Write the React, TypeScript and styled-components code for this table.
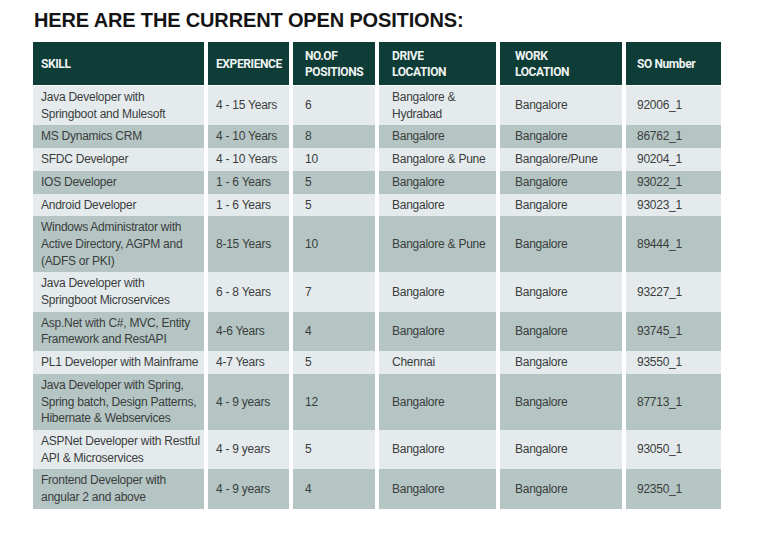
import React from 'react'
import styled, { createGlobalStyle } from 'styled-components'

const GlobalStyle = createGlobalStyle`
  html, body {
    margin: 0;
    padding: 0;
    background: #ffffff;
  }
  body {
    font-family: 'Liberation Sans', Arial, sans-serif;
  }
`

type Column = { key: string; title: React.ReactNode; width: number; pad: number }

const columns: Column[] = [
  { key: 'skill', title: 'SKILL', width: 171, pad: 8 },
  { key: 'exp', title: 'EXPERIENCE', width: 81, pad: 8 },
  { key: 'pos', title: <>NO.OF<br />POSITIONS</>, width: 82, pad: 12 },
  { key: 'drive', title: <>DRIVE<br />LOCATION</>, width: 117, pad: 13 },
  { key: 'work', title: <>WORK<br />LOCATION</>, width: 122, pad: 15 },
  { key: 'so', title: 'SO Number', width: 95, pad: 11 }
]

const rows: string[][] = [
  ['Java Developer with\nSpringboot and Mulesoft', '4 - 15 Years', '6', 'Bangalore &\nHydrabad', 'Bangalore', '92006_1'],
  ['MS Dynamics CRM', '4 - 10 Years', '8', 'Bangalore', 'Bangalore', '86762_1'],
  ['SFDC Developer', '4 - 10 Years', '10', 'Bangalore & Pune', 'Bangalore/Pune', '90204_1'],
  ['IOS Developer', '1 - 6 Years', '5', 'Bangalore', 'Bangalore', '93022_1'],
  ['Android Developer', '1 - 6 Years', '5', 'Bangalore', 'Bangalore', '93023_1'],
  ['Windows Administrator with\nActive Directory, AGPM and\n(ADFS or PKI)', '8-15 Years', '10', 'Bangalore & Pune', 'Bangalore', '89444_1'],
  ['Java Developer with\nSpringboot Microservices', '6 - 8 Years', '7', 'Bangalore', 'Bangalore', '93227_1'],
  ['Asp.Net with C#, MVC, Entity\nFramework and RestAPI', '4-6 Years', '4', 'Bangalore', 'Bangalore', '93745_1'],
  ['PL1 Developer with Mainframe', '4-7 Years', '5', 'Chennai', 'Bangalore', '93550_1'],
  ['Java Developer with Spring,\nSpring batch, Design Patterns,\nHibernate & Webservices', '4 - 9 years', '12', 'Bangalore', 'Bangalore', '87713_1'],
  ['ASPNet Developer with Restful\nAPI & Microservices', '4 - 9 years', '5', 'Bangalore', 'Bangalore', '93050_1'],
  ['Frontend Developer with\nangular 2 and above', '4 - 9 years', '4', 'Bangalore', 'Bangalore', '92350_1']
]

const Page = styled.div`
  width: 757px;
  height: 537px;
  padding: 8px 0 0 29px;
  box-sizing: border-box;
  overflow: hidden;
`

const Title = styled.h1`
  margin: 0 0 10px 5px;
  font-family: 'Liberation Sans', Arial, sans-serif;
  font-weight: 700;
  font-size: 20px;
  line-height: 24px;
  letter-spacing: -0.15px;
  color: #141414;
`

const Table = styled.table`
  border-collapse: separate;
  border-spacing: 4px 0;
  table-layout: fixed;
`

const HeadCell = styled.th<{ $w: number; $pad: number }>`
  width: ${(p) => p.$w}px;
  height: 44px;
  box-sizing: border-box;
  padding: 0 0 0 ${(p) => p.$pad}px;
  background: #0e3c37;
  color: #eef3f2;
  text-align: left;
  vertical-align: middle;
  white-space: nowrap;
  font-family: Roboto, 'Liberation Sans', sans-serif;
  font-weight: 700;
  font-size: 12px;
  line-height: 16px;
  letter-spacing: -0.4px;
  border-bottom: 1px solid #ffffff;
`

const Row = styled.tr<{ $shade: boolean }>`
  background: ${(p) => (p.$shade ? '#b4c5c3' : '#e5ebed')};
`

const Cell = styled.td<{ $pad: number }>`
  box-sizing: border-box;
  padding: 3px 0 3px ${(p) => p.$pad}px;
  vertical-align: middle;
  white-space: pre;
  overflow: hidden;
  font-family: 'Liberation Sans', Arial, sans-serif;
  font-size: 12px;
  line-height: 16.7px;
  letter-spacing: -0.25px;
  color: #3b3d3d;
`

export default function App() {
  return (
    <>
      <GlobalStyle />
      <Page>
        <Title>HERE ARE THE CURRENT OPEN POSITIONS:</Title>
        <Table>
          <thead>
            <tr>
              {columns.map((c) => (
                <HeadCell key={c.key} $w={c.width} $pad={c.pad}>
                  {c.title}
                </HeadCell>
              ))}
            </tr>
          </thead>
          <tbody>
            {rows.map((r, i) => (
              <Row key={r[5]} $shade={i % 2 === 1}>
                {r.map((v, j) => (
                  <Cell key={columns[j].key} $pad={columns[j].pad}>
                    {v}
                  </Cell>
                ))}
              </Row>
            ))}
          </tbody>
        </Table>
      </Page>
    </>
  )
}
